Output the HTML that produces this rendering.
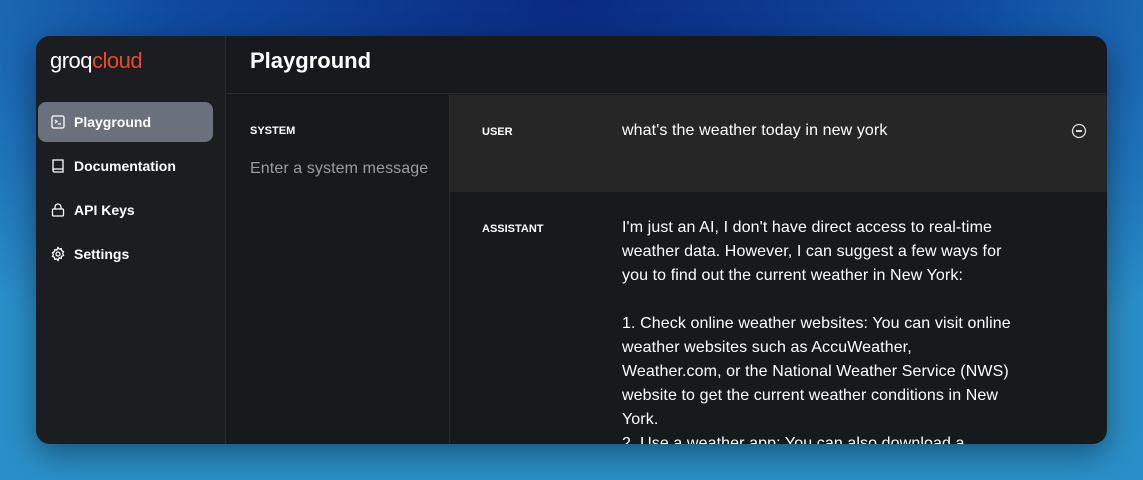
<!DOCTYPE html>
<html><head><style>
*{margin:0;padding:0;box-sizing:border-box}
body{width:1143px;height:480px;overflow:hidden;font-family:"Liberation Sans",sans-serif;
background:radial-gradient(ellipse 70% 90% at 50% 0%,#0a2a80 0%,#0f4aa0 50%,#2a8fc8 100%),#1a5fb0;position:relative}
.win{position:absolute;left:36px;top:36px;width:1071px;height:408px;border-radius:14px;overflow:hidden;background:#18191c;box-shadow:0 10px 30px rgba(0,0,0,.4)}
.side{position:absolute;left:0;top:0;width:190px;height:100%;background:#1c1d21;border-right:1px solid #2a2b2f}
.logo{position:absolute;left:14px;top:12px;font-size:22px;letter-spacing:-0.5px;color:#fff;font-weight:300}
.logo span{color:#e8492f}
.nav{position:absolute;left:2px;width:175px;height:40px;border-radius:8px;color:#fff;font-weight:bold;font-size:14px;display:flex;align-items:center;padding-left:36px}
.nav.act{background:#6b717c}
.nav svg{position:absolute;left:12px;top:12px}
.head{position:absolute;left:190px;top:0;right:0;height:58px;border-bottom:1px solid #2a2b2f;color:#fff;font-weight:bold;font-size:22px;padding:12px 0 0 24px}
.sys{position:absolute;left:190px;top:58px;width:224px;bottom:0;border-right:1px solid #2a2b2f}
.lbl{font-size:11px;font-weight:bold;color:#fff;position:absolute}
.user{position:absolute;left:414px;top:59px;right:0;height:97px;background:#262626}
.txt{position:absolute;color:#fff;font-size:16px;line-height:24px;white-space:nowrap;letter-spacing:0.1px}
</style></head><body>
<div class="win">
<div class="side">
<div class="logo">groq<span>cloud</span></div>
<div class="nav act" style="top:66px"><svg width="16" height="16" viewBox="0 0 16 16" fill="none" stroke="#fff" stroke-width="1.3"><rect x="2" y="2" width="12" height="12" rx="1.5"/><path d="M5 6l2 1.5L5 9M8 10h3"/></svg>Playground</div>
<div class="nav" style="top:110px"><svg width="16" height="16" viewBox="0 0 16 16" fill="none" stroke="#fff" stroke-width="1.3"><path d="M3 2h10v12H4.5A1.5 1.5 0 013 12.5zM3 12.5A1.5 1.5 0 014.5 11H13"/></svg>Documentation</div>
<div class="nav" style="top:154px"><svg width="16" height="16" viewBox="0 0 16 16" fill="none" stroke="#fff" stroke-width="1.3"><rect x="2.5" y="7" width="11" height="7" rx="1"/><path d="M5 7V5a3 3 0 016 0v2"/></svg>API Keys</div>
<div class="nav" style="top:198px"><svg width="16" height="16" viewBox="0 0 16 16" fill="none" stroke="#fff" stroke-width="1.3"><circle cx="8" cy="8" r="2"/><path d="M8 1.5l1.2 1.6 2-.4.4 2 1.9.9-.9 1.9.9 1.9-1.9.9-.4 2-2-.4L8 14.5l-1.2-1.6-2 .4-.4-2-1.9-.9.9-1.9-.9-1.9 1.9-.9.4-2 2 .4z"/></svg>Settings</div>
</div>
<div class="head">Playground</div>
<div class="sys"><div class="lbl" style="left:24px;top:31px">SYSTEM</div>
<div class="txt" style="left:24px;top:63px;color:#9a9ca3;font-size:16px">Enter a system message</div></div>
<div class="user"><div class="lbl" style="left:32px;top:31px">USER</div>
<div class="txt" style="left:172px;top:24px">what's the weather today in new york</div>
<svg style="position:absolute;left:621px;top:28px" width="16" height="16" viewBox="0 0 16 16" fill="none" stroke="#ddd" stroke-width="1.3"><circle cx="8" cy="8" r="6.5"/><path d="M5 8h6" stroke-width="2"/></svg></div>
<div class="lbl" style="left:446px;top:187px">ASSISTANT</div>
<div class="txt" style="left:586px;top:180px">I'm just an AI, I don't have direct access to real-time<br>weather data. However, I can suggest a few ways for<br>you to find out the current weather in New York:<br><br>1. Check online weather websites: You can visit online<br>weather websites such as AccuWeather,<br>Weather.com, or the National Weather Service (NWS)<br>website to get the current weather conditions in New<br>York.<br>2. Use a weather app: You can also download a</div>
</div>
</body></html>
